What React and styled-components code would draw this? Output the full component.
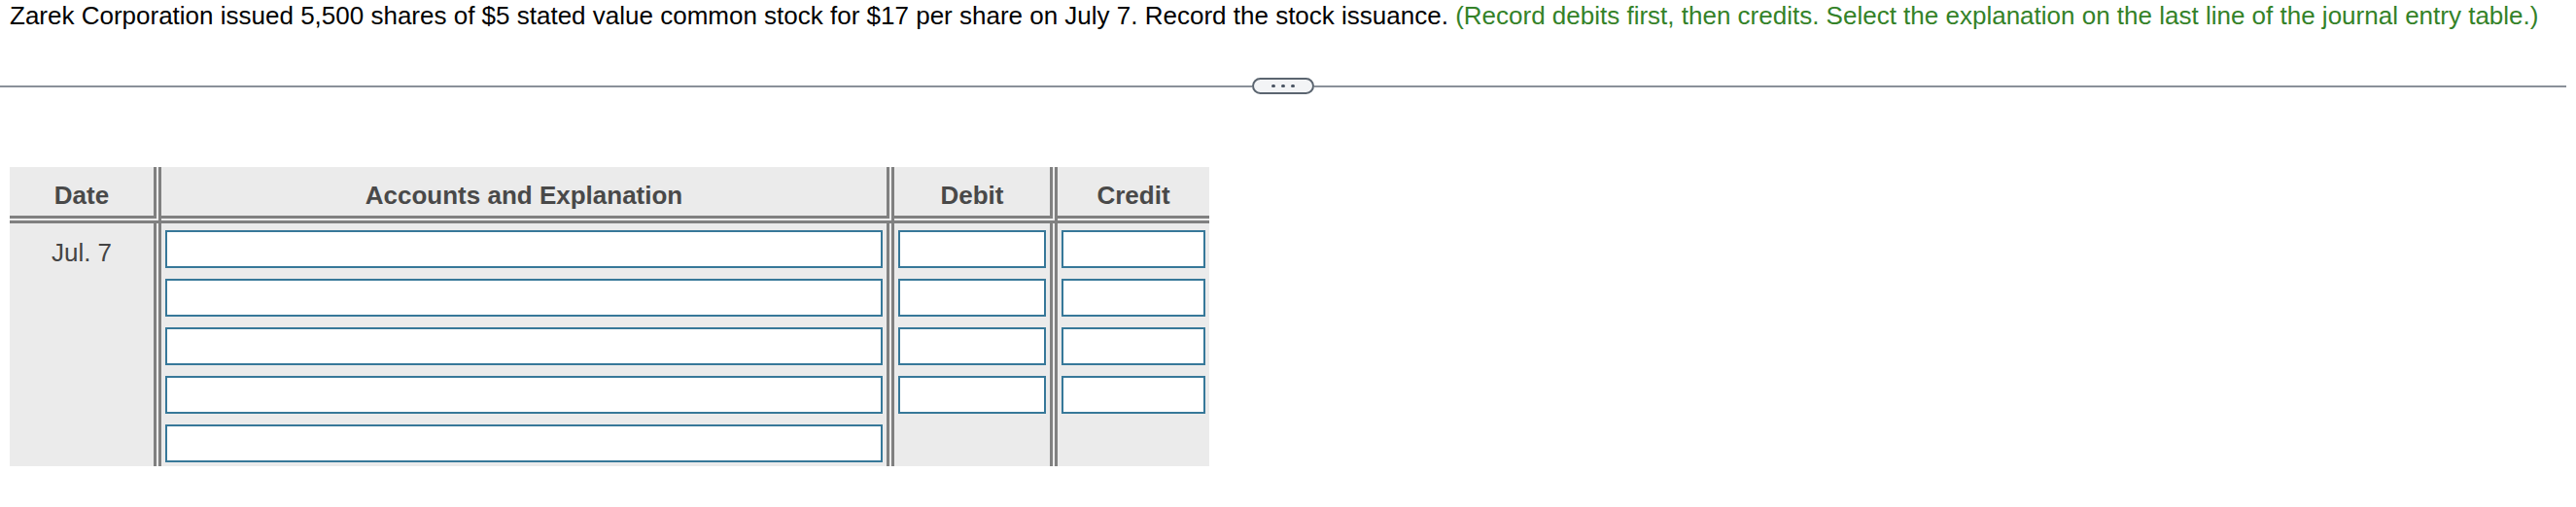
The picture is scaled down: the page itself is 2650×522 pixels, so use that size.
import React from "react";
import styled, { createGlobalStyle } from "styled-components";

const GlobalStyle = createGlobalStyle`
  html, body {
    margin: 0;
    padding: 0;
    background: #ffffff;
  }
  body {
    font-family: "Liberation Sans", Arial, sans-serif;
  }
  * { box-sizing: border-box; }
`;

const Page = styled.div`
  width: 2650px;
  padding-top: 2px;
`;

const Question = styled.p`
  margin: 0;
  padding: 0 10px;
  font-size: 26px;
  line-height: 29px;
  color: #000;
  white-space: nowrap;
`;

const Hint = styled.span`
  color: #348228;
`;

const Separator = styled.div`
  display: flex;
  align-items: center;
  margin: 49px 10px 0 0;
  height: 17px;
`;

const Rule = styled.div`
  flex: 1;
  height: 2px;
  background: #8a9099;
`;

const MoreButton = styled.button`
  display: flex;
  align-items: center;
  justify-content: center;
  gap: 6.5px;
  width: 64px;
  height: 17px;
  padding: 0;
  border: 2px solid #5b6570;
  border-radius: 9px;
  background: #f3f4f6;
  cursor: pointer;
`;

const Dot = styled.span`
  width: 3.5px;
  height: 3.5px;
  border-radius: 50%;
  background: #4b5563;
`;

const Journal = styled.div`
  margin: 75px 0 0 10px;
  width: 1234px;
  background: #ebebeb;
`;

const Row = styled.div`
  display: grid;
  grid-template-columns: 156px 754px 168px 156px;
`;

const HeadCell = styled.div`
  height: 58px;
  padding-top: 15px;
  text-align: center;
  font-size: 26px;
  line-height: 29px;
  font-weight: bold;
  color: #494949;
  border-bottom: 8px double #808080;
  border-right: ${(p) => (p.$last ? "none" : "8px double #808080")};
`;

const Cell = styled.div`
  height: 50px;
  padding: ${(p) => (p.$date ? "16px 0 0" : "7px 4px 0")};
  text-align: center;
  font-size: 26px;
  line-height: 29px;
  color: #444;
  border-right: ${(p) => (p.$last ? "none" : "8px double #808080")};
`;

const EntryInput = styled.input`
  display: block;
  width: 100%;
  height: 39px;
  margin: 0;
  padding: 0 6px;
  border: 2px solid #377899;
  background: #fff;
  font-family: "Liberation Sans", Arial, sans-serif;
  font-size: 22px;
  outline: none;
`;

const rows = [
  { date: "Jul. 7", amounts: true },
  { date: "", amounts: true },
  { date: "", amounts: true },
  { date: "", amounts: true },
  { date: "", amounts: false },
];

export default function App() {
  return (
    <>
      <GlobalStyle />
      <Page>
        <Question>
          Zarek Corporation issued 5,500 shares of $5 stated value common stock
          for $17 per share on July 7. Record the stock issuance.{" "}
          <Hint>
            (Record debits first, then credits. Select the explanation on the
            last line of the journal entry table.)
          </Hint>
        </Question>
        <Separator>
          <Rule />
          <MoreButton aria-label="More">
            <Dot />
            <Dot />
            <Dot />
          </MoreButton>
          <Rule />
        </Separator>
        <Journal>
          <Row>
            <HeadCell>Date</HeadCell>
            <HeadCell>Accounts and Explanation</HeadCell>
            <HeadCell>Debit</HeadCell>
            <HeadCell $last>Credit</HeadCell>
          </Row>
          {rows.map((r, i) => (
            <Row key={i}>
              <Cell $date>{r.date}</Cell>
              <Cell>
                <EntryInput type="text" />
              </Cell>
              <Cell>{r.amounts && <EntryInput type="text" />}</Cell>
              <Cell $last>{r.amounts && <EntryInput type="text" />}</Cell>
            </Row>
          ))}
        </Journal>
      </Page>
    </>
  );
}
